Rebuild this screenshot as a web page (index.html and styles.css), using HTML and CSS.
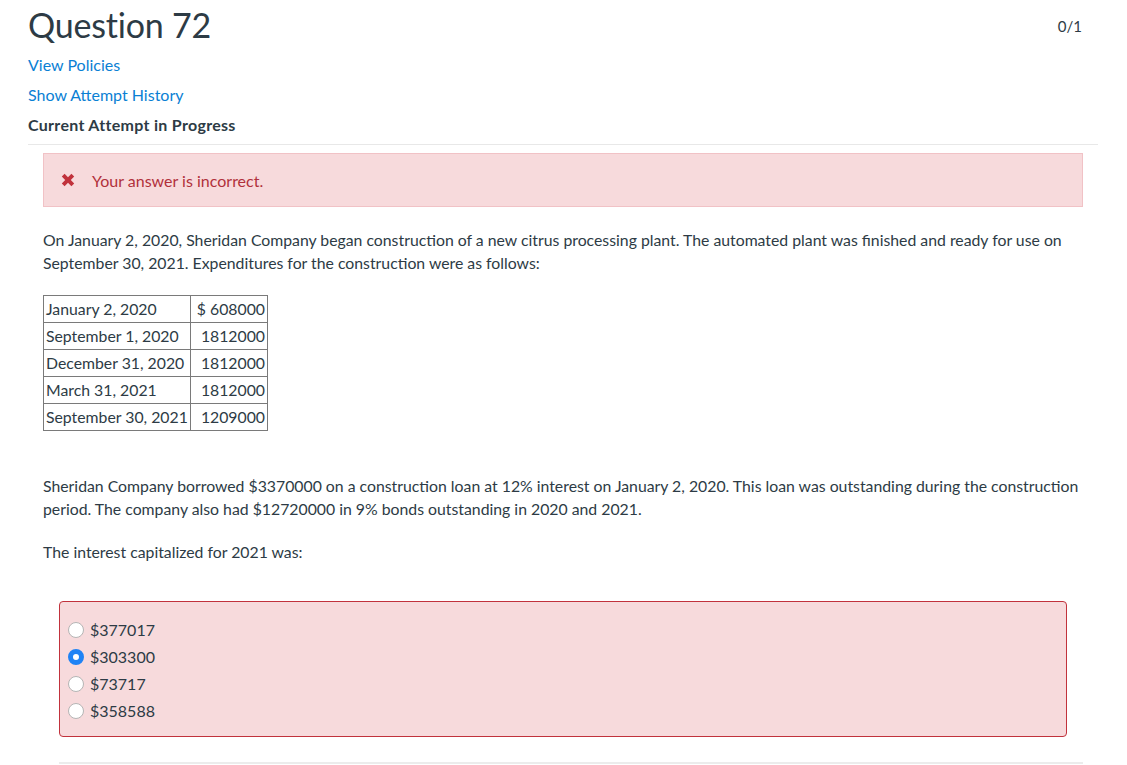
FILE: index.html
```html
<!DOCTYPE html>
<html>
<head>
<meta charset="utf-8">
<link rel="stylesheet" href="styles.css">
</head>
<body>
<div class="page">
  <div class="head">
    <div class="head-left">
      <h1 class="title">Question 72</h1>
      <a class="link" href="#">View Policies</a>
      <a class="link" href="#">Show Attempt History</a>
      <div class="attempt">Current Attempt in Progress</div>
    </div>
    <div class="score">0/1</div>
  </div>
  <div class="rule"></div>
  <div class="content">
    <div class="alert">
      <svg class="xicon" viewBox="0 0 16 16" width="16" height="16"><path d="M1.8 4.6 4.6 1.8 8 5.2 11.4 1.8 14.2 4.6 10.8 8 14.2 11.4 11.4 14.2 8 10.8 4.6 14.2 1.8 11.4 5.2 8Z" fill="#c1323c"/></svg>
      <span>Your answer is incorrect.</span>
    </div>
    <p class="para">On January 2, 2020, Sheridan Company began construction of a new citrus processing plant. The automated plant was finished and ready for use on September 30, 2021. Expenditures for the construction were as follows:</p>
    <table class="exp">
      <tr><td>January 2, 2020</td><td class="num">$ 608000</td></tr>
      <tr><td>September 1, 2020</td><td class="num">1812000</td></tr>
      <tr><td>December 31, 2020</td><td class="num">1812000</td></tr>
      <tr><td>March 31, 2021</td><td class="num">1812000</td></tr>
      <tr><td>September 30, 2021</td><td class="num">1209000</td></tr>
    </table>
    <p class="para p2">Sheridan Company borrowed $3370000 on a construction loan at 12% interest on January 2, 2020. This loan was outstanding during the construction period. The company also had $12720000 in 9% bonds outstanding in 2020 and 2021.</p>
    <p class="para p3">The interest capitalized for 2021 was:</p>
    <div class="answers">
      <label class="opt"><span class="radio"></span>$377017</label>
      <label class="opt"><span class="radio on"></span>$303300</label>
      <label class="opt"><span class="radio"></span>$73717</label>
      <label class="opt"><span class="radio"></span>$358588</label>
    </div>
    <div class="bottom-rule"></div>
  </div>
</div>
</body>
</html>
```

FILE: styles.css
```css
html, body {
  margin: 0;
  padding: 0;
  background: #ffffff;
}
body {
  font-family: Lato, "Open Sans", sans-serif;
  color: #2d3b45;
}
.page {
  padding: 0 29px 0 28px;
}
.head {
  display: flex;
  justify-content: space-between;
  align-items: flex-start;
}
.head-left {
  display: flex;
  flex-direction: column;
}
.title {
  font-size: 34px;
  font-weight: 400;
  margin: 5px 0 0 0;
  line-height: 40px;
  letter-spacing: -0.2px;
}
.link {
  color: #0a80d4;
  text-decoration: none;
  font-size: 16px;
  line-height: 30px;
}
.link:first-of-type {
  margin-top: 5px;
}
.attempt {
  font-size: 16px;
  font-weight: 700;
  line-height: 30px;
  color: #2d3b45;
  letter-spacing: 0.3px;
}
.score {
  font-size: 15px;
  margin-top: 17px;
  margin-right: 16px;
}
.rule {
  height: 1px;
  background: #e8e8e8;
  margin-top: 4px;
}
.content {
  padding: 8px 15px 0 15px;
}
.alert {
  display: flex;
  align-items: center;
  height: 52px;
  background: #f7dadc;
  border: 1px solid #f1c2c6;
  padding-left: 16px;
  color: #b1303b;
  font-size: 16px;
}
.xicon {
  margin-right: 16px;
}
.para {
  margin: 21px 0 0 0;
  font-size: 15.8px;
  line-height: 23px;
  color: #2d3b45;
}
.exp {
  border-collapse: collapse;
  margin-top: 21px;
  font-size: 15.8px;
  color: #2d3b45;
}
.exp td {
  border: 1px solid #7a7a7a;
  height: 26px;
  padding: 0 2px;
  line-height: 25.6px;
  white-space: nowrap;
}
.exp td.num {
  text-align: right;
  padding-left: 6px;
  padding-right: 2px;
}
.p2 {
  margin-top: 43px;
}
.p3 {
  margin-top: 20px;
}
.answers {
  margin: 38px 16px 0 16px;
  background: #f7dadc;
  border: 1px solid #c1323c;
  border-radius: 4px;
  padding: 14px 8px 12px 8px;
  display: flex;
  flex-direction: column;
}
.opt {
  display: flex;
  align-items: center;
  height: 27px;
  font-size: 16px;
  color: #2d3b45;
}
.radio {
  width: 14px;
  height: 14px;
  border-radius: 50%;
  border: 1px solid #b5b5b5;
  background: #ffffff;
  margin-right: 6px;
  box-sizing: content-box;
  flex: none;
}
.radio.on {
  width: 6px;
  height: 6px;
  border: 5px solid #1f83f5;
  background: #ffffff;
}
.bottom-rule {
  margin: 25px 0 0 16px;
  height: 2px;
  background: #ececec;
}
```
